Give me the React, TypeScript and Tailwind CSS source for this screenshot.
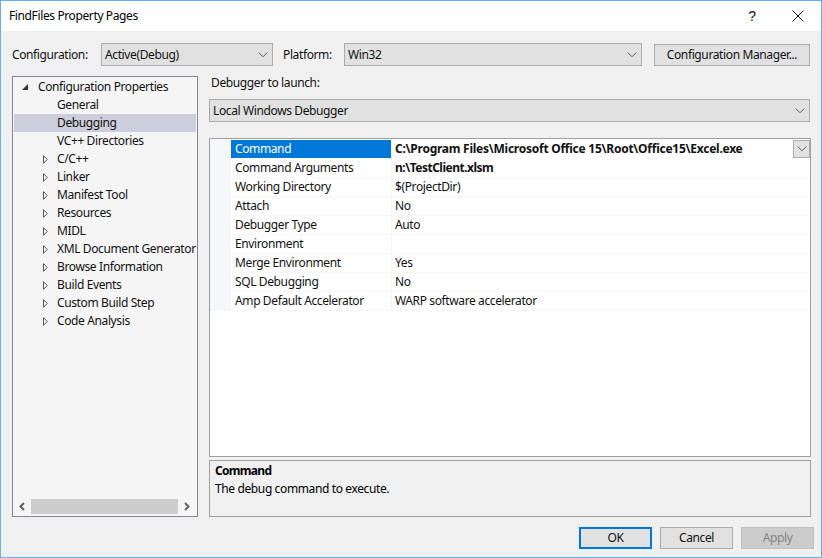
import React from "react";

function Chevron({ className = "" }: { className?: string }) {
  return (
    <svg width="10" height="6" viewBox="0 0 10 6" className={className} fill="none" stroke="#5f5f5f" strokeWidth="1">
      <path d="M0.8 0.6 L5 4.8 L9.2 0.6" />
    </svg>
  );
}

function Select({ text, className }: { text: string; className: string }) {
  return (
    <div className={`flex items-center justify-between h-[23px] border border-[#acacac] bg-[#e1e1e1] pl-[3px] pr-[4px] text-[#111] ${className}`}>
      <span>{text}</span>
      <Chevron />
    </div>
  );
}

const tree: { label: string; arrow?: boolean; selected?: boolean }[] = [
  { label: "General" },
  { label: "Debugging", selected: true },
  { label: "VC++ Directories" },
  { label: "C/C++", arrow: true },
  { label: "Linker", arrow: true },
  { label: "Manifest Tool", arrow: true },
  { label: "Resources", arrow: true },
  { label: "MIDL", arrow: true },
  { label: "XML Document Generator", arrow: true },
  { label: "Browse Information", arrow: true },
  { label: "Build Events", arrow: true },
  { label: "Custom Build Step", arrow: true },
  { label: "Code Analysis", arrow: true },
];

const rows: [string, string, boolean][] = [
  ["Command Arguments", "n:\\TestClient.xlsm", true],
  ["Working Directory", "$(ProjectDir)", false],
  ["Attach", "No", false],
  ["Debugger Type", "Auto", false],
  ["Environment", "", false],
  ["Merge Environment", "Yes", false],
  ["SQL Debugging", "No", false],
  ["Amp Default Accelerator", "WARP software accelerator", false],
];

export default function App() {
  return (
    <div className="w-[822px] h-[558px] border border-[#64b0f2] bg-[#f0f0f0] flex flex-col overflow-hidden text-[12px] leading-[16px] text-[#111] font-['Noto_Sans',sans-serif] tracking-[-0.38px]">
      <div className="h-[30px] shrink-0 bg-white flex items-center pl-[8px]">
        <span className="text-[12px] text-black grow">FindFiles Property Pages</span>
        <span className="w-[16px] text-center text-[14px] mr-[32px] font-['Liberation_Sans',sans-serif]">?</span>
        <svg width="12" height="12" viewBox="0 0 12 12" stroke="#111" strokeWidth="1" className="mr-[17px]">
          <path d="M0.5 0.5 L11.5 11.5 M11.5 0.5 L0.5 11.5" />
        </svg>
      </div>

      <div className="flex items-center h-[23px] mt-[12px] pl-[11px]">
        <span className="w-[89px]">Configuration:</span>
        <Select text="Active(Debug)" className="w-[172px]" />
        <span className="w-[61px] ml-[10px]">Platform:</span>
        <Select text="Win32" className="w-[298px]" />
        <div className="ml-[12px] w-[156px] h-[22px] mt-[1px] border border-[#acacac] bg-[#e1e1e1] flex items-center justify-center">
          Configuration Manager...
        </div>
      </div>

      <div className="flex mt-[10px] pl-[11px] h-[441px]">
        <div className="w-[186px] h-full border border-[#828790] bg-[#f5f5f5] flex flex-col p-[1px]">
          <div className="grow">
            <div className="h-[18px] flex items-center">
              <svg width="8" height="8" viewBox="0 0 8 8" className="ml-[7px] mr-[9px]" fill="#333">
                <path d="M7 1 V7 H1 Z" />
              </svg>
              <span>Configuration Properties</span>
            </div>
            {tree.map((t) => (
              <div key={t.label} className={`h-[18px] flex items-center ${t.selected ? "bg-[#cccedb]" : ""}`}>
                <span className="w-[43px] shrink-0 flex justify-end pr-[9px]">
                  {t.arrow && (
                    <svg width="5" height="9" viewBox="0 0 5 9" fill="none" stroke="#555">
                      <path d="M0.5 0.7 L4.3 4.5 L0.5 8.3 Z" />
                    </svg>
                  )}
                </span>
                <span className="whitespace-nowrap">{t.label}</span>
              </div>
            ))}
          </div>
          <div className="h-[15px] flex items-center mb-[1px] shrink-0">
            <svg width="17" height="15" viewBox="0 0 17 15" fill="none" stroke="#606060" strokeWidth="2">
              <path d="M10 4 L6.5 7.5 L10 11" />
            </svg>
            <div className="w-[147px] h-full bg-[#cdcdcd]" />
            <svg width="17" height="15" viewBox="0 0 17 15" fill="none" stroke="#606060" strokeWidth="2">
              <path d="M7 4 L10.5 7.5 L7 11" />
            </svg>
          </div>
        </div>

        <div className="ml-[11px] w-[602px] h-full flex flex-col">
          <div className="h-[16px] pl-[2px] -mt-[1px] mb-[8px]">Debugger to launch:</div>
          <Select text="Local Windows Debugger" className="w-[601px] shrink-0" />
          <div className="mt-[16px] h-[319px] shrink-0 border border-[#a0a0a0] bg-white flex flex-col pt-[1px] relative">
            <div className="h-[19px] flex shrink-0">
              <div className="w-[21px] bg-[#f5f7fb]" />
              <div className="w-[160px] h-[18px] bg-[#0078d7] text-white pl-[4px] flex items-center">Command</div>
              <div className="w-px bg-[#f5f5f5]" />
              <div className="pl-[3px] font-bold flex items-center h-[18px] text-[#111] tracking-[-0.25px]">C:\Program Files\Microsoft Office 15\Root\Office15\Excel.exe</div>
              <div className="absolute right-0 top-[1px] w-[17px] h-[18px] border border-[#acacac] bg-[#e1e1e1] flex items-center justify-center">
                <Chevron />
              </div>
            </div>
            {rows.map(([k, v, bold]) => (
              <div key={k} className="h-[19px] flex shrink-0 border-b border-[#f5f7fb]">
                <div className="w-[21px] bg-[#f5f7fb]" />
                <div className="w-[160px] pl-[4px] flex items-center">{k}</div>
                <div className="w-px bg-[#f5f5f5]" />
                <div className={`pl-[3px] flex items-center ${bold ? "font-bold tracking-[-0.5px]" : ""}`}>{v}</div>
              </div>
            ))}
          </div>
          <div className="mt-[3px] h-[57px] shrink-0 border border-[#a0a0a0] bg-[#f0f0f0] pl-[5px] pt-[2px] flex flex-col gap-[2px]">
            <div className="font-bold text-black tracking-[-0.7px]">Command</div>
            <div className="text-black">The debug command to execute.</div>
          </div>
        </div>
      </div>

      <div className="flex mt-[10px] pl-[578px]">
        <div className="w-[73px] h-[22px] border-2 border-[#0078d7] bg-[#e1e1e1] flex items-center justify-center">OK</div>
        <div className="w-[73px] h-[22px] ml-[8px] border border-[#acacac] bg-[#e1e1e1] flex items-center justify-center">Cancel</div>
        <div className="w-[73px] h-[22px] ml-[8px] border border-[#bfbfbf] bg-[#cccccc] text-[#838383] flex items-center justify-center">Apply</div>
      </div>
    </div>
  );
}
